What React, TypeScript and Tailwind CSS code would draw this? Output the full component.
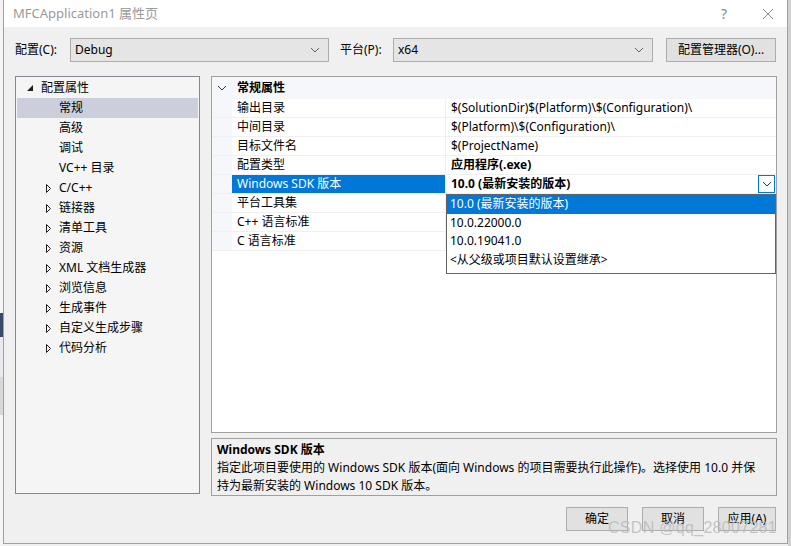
import React from 'react';

const font = { fontFamily: '"Noto Sans", "Noto Sans CJK SC", sans-serif' };

const treeItems: { label: string; level: 0 | 1; arrow?: 'open' | 'closed'; selected?: boolean }[] = [
    { label: '配置属性', level: 0, arrow: 'open' },
    { label: '常规', level: 1, selected: true },
    { label: '高级', level: 1 },
    { label: '调试', level: 1 },
    { label: 'VC++ 目录', level: 1 },
    { label: 'C/C++', level: 1, arrow: 'closed' },
    { label: '链接器', level: 1, arrow: 'closed' },
    { label: '清单工具', level: 1, arrow: 'closed' },
    { label: '资源', level: 1, arrow: 'closed' },
    { label: 'XML 文档生成器', level: 1, arrow: 'closed' },
    { label: '浏览信息', level: 1, arrow: 'closed' },
    { label: '生成事件', level: 1, arrow: 'closed' },
    { label: '自定义生成步骤', level: 1, arrow: 'closed' },
    { label: '代码分析', level: 1, arrow: 'closed' },
];

const props: { name: string; value: string; bold?: boolean; selected?: boolean }[] = [
    { name: '输出目录', value: '$(SolutionDir)$(Platform)\\$(Configuration)\\' },
    { name: '中间目录', value: '$(Platform)\\$(Configuration)\\' },
    { name: '目标文件名', value: '$(ProjectName)' },
    { name: '配置类型', value: '应用程序(.exe)', bold: true },
    { name: 'Windows SDK 版本', value: '10.0 (最新安装的版本)', bold: true, selected: true },
    { name: '平台工具集', value: '' },
    { name: 'C++ 语言标准', value: '' },
    { name: 'C 语言标准', value: '' },
];

const options = ['10.0 (最新安装的版本)', '10.0.22000.0', '10.0.19041.0', '<从父级或项目默认设置继承>'];

const Chevron: React.FC<{ className?: string }> = ({ className }) => (
    <svg width="10" height="6" viewBox="0 0 10 6" className={className}>
        <path d="M1 1 L5 5 L9 1" fill="none" stroke="currentColor" strokeWidth="1" />
    </svg>
);

const Combo: React.FC<{ value: string; width: string }> = ({ value, width }) => (
    <div className={`${width} h-[24px] flex items-center justify-between bg-[#e5e5e5] border border-[#adadad] pl-[4px] pr-[8px]`}>
        <span className="text-[12px] text-black">{value}</span>
        <Chevron className="text-[#606060]" />
    </div>
);

const WinButton: React.FC<{ label: string; width: string }> = ({ label, width }) => (
    <div className={`${width} h-[24px] flex items-center justify-center bg-[#e1e1e1] border border-[#adadad] text-[12px] text-black`}>
        {label}
    </div>
);

export default function App() {
    return (
        <div className="w-[791px] h-[546px] flex bg-[#f0f0f0] overflow-hidden" style={font}>
            {/* strip of the window behind */}
            <div className="w-[3px] h-full flex flex-col bg-[#f4f4f4]">
                <div className="h-[313px]" />
                <div className="h-[24px] bg-[#3b4a6b]" />
                <div className="h-[40px] bg-[#e9e9ef]" />
                <div className="h-[38px] bg-[#d8d8d8]" />
            </div>

            {/* dialog */}
            <div className="w-[785px] h-[544px] flex flex-col border-l border-r border-b border-[#a0a0a0] bg-[#f0f0f0] relative">
                {/* title bar */}
                <div className="h-[27px] bg-white flex items-center pl-[9px] pr-[13px]">
                    <span className="text-[13px] text-[#9a9a9a]">MFCApplication1 属性页</span>
                    <span className="ml-auto text-[14px] text-[#888] mr-[35px]">?</span>
                    <svg width="12" height="12" viewBox="0 0 12 12">
                        <path d="M1 1 L11 11 M11 1 L1 11" stroke="#888" strokeWidth="1" />
                    </svg>
                </div>

                {/* configuration row */}
                <div className="flex items-center pl-[11px] pt-[11px] h-[35px]">
                    <span className="w-[55px] text-[12px] text-black">配置(C):</span>
                    <Combo value="Debug" width="w-[259px]" />
                    <span className="ml-[11px] w-[53px] text-[12px] text-black">平台(P):</span>
                    <Combo value="x64" width="w-[260px]" />
                    <div className="ml-[13px]">
                        <WinButton label="配置管理器(O)..." width="w-[110px]" />
                    </div>
                </div>

                <div className="flex pl-[11px] pt-[14px] gap-[11px]">
                    {/* tree */}
                    <div className="w-[185px] h-[418px] border border-[#828790] bg-[#f5f5f5] pt-[1px] px-[1px]">
                        {treeItems.map(item => (
                            <div
                                key={item.label}
                                className={`h-[20px] flex items-center text-[12px] text-black ${item.selected ? 'bg-[#cccedb]' : ''}`}
                            >
                                {item.level === 0 ? (
                                    <>
                                        <svg width="6" height="6" viewBox="0 0 6 6" className="ml-[10px] mr-[8px]">
                                            <path d="M6 0 L6 6 L0 6 Z" fill="#1e1e1e" />
                                        </svg>
                                        <span>{item.label}</span>
                                    </>
                                ) : (
                                    <>
                                        <div className="w-[42px] flex justify-end pr-[8px]">
                                            {item.arrow === 'closed' && (
                                                <svg width="5" height="9" viewBox="0 0 5 9">
                                                    <path d="M0.5 0.5 L4.5 4.5 L0.5 8.5 Z" fill="none" stroke="#1e1e1e" strokeWidth="1" />
                                                </svg>
                                            )}
                                        </div>
                                        <span>{item.label}</span>
                                    </>
                                )}
                            </div>
                        ))}
                    </div>

                    <div className="flex flex-col gap-[5px]">
                        {/* property grid */}
                        <div className="w-[566px] h-[357px] border border-[#a0a0a0] bg-white relative">
                            <div className="h-[22px] flex items-center bg-[#f5f7fa]">
                                <div className="w-[20px] flex justify-center">
                                    <Chevron className="text-[#333]" />
                                </div>
                                <span className="ml-[5px] text-[12px] font-bold text-black">常规属性</span>
                            </div>
                            <div className="flex flex-col">
                                {props.map(p => (
                                    <div key={p.name} className="h-[19px] flex border-b border-[#f0f0f0] bg-[#f5f7fa]">
                                        <div className="w-[20px]" />
                                        <div
                                            className={`w-[214px] flex items-center pl-[5px] text-[12px] border-r border-[#f0f0f0] ${
                                                p.selected ? 'bg-[#0078d7] text-white' : 'bg-white text-black'
                                            }`}
                                        >
                                            {p.name}
                                        </div>
                                        <div className="flex-1 flex items-center pl-[5px] bg-white text-[12px] text-black">
                                            <span className={p.bold ? 'font-bold' : ''}>{p.value}</span>
                                            {p.selected && (
                                                <div className="ml-auto mr-[1px] w-[17px] h-[18px] border border-[#0078d7] bg-white flex items-center justify-center">
                                                    <Chevron className="text-[#333]" />
                                                </div>
                                            )}
                                        </div>
                                    </div>
                                ))}
                            </div>

                            {/* open drop-down list */}
                            <div className="absolute left-[234px] top-[117px] w-[330px] h-[80px] border border-[#646464] bg-white flex flex-col">
                                {options.map((o, i) => (
                                    <div
                                        key={o}
                                        className={`h-[18.5px] flex items-center pl-[3px] text-[12px] ${
                                            i === 0 ? 'bg-[#0078d7] text-white' : 'text-black'
                                        }`}
                                    >
                                        {o}
                                    </div>
                                ))}
                            </div>
                        </div>

                        {/* description */}
                        <div className="w-[566px] h-[58px] border border-[#a0a0a0] bg-[#f0f0f0] pl-[5px] pr-[10px] pt-[2px] text-[12px] text-black leading-[18px]">
                            <div className="font-bold">Windows SDK 版本</div>
                            <div>
                                指定此项目要使用的 Windows SDK 版本(面向 Windows 的项目需要执行此操作)。选择使用 10.0 并保持为最新安装的 Windows 10 SDK 版本。
                            </div>
                        </div>
                    </div>
                </div>

                {/* bottom buttons */}
                <div className="flex justify-end gap-[14px] pr-[11px] pt-[11px]">
                    <WinButton label="确定" width="w-[62px]" />
                    <WinButton label="取消" width="w-[62px]" />
                    <WinButton label="应用(A)" width="w-[58px]" />
                </div>

                {/* watermark */}
                <div className="absolute left-[604px] top-[516px] text-[16px] text-[#b8b8b8]/80 tracking-[0.3px]" style={{ fontFamily: '"Liberation Sans", sans-serif' }}>
                    CSDN @qq_28007281
                </div>
            </div>

            <div className="w-[3px] h-full bg-[#d0d0d0]" />
        </div>
    );
}
